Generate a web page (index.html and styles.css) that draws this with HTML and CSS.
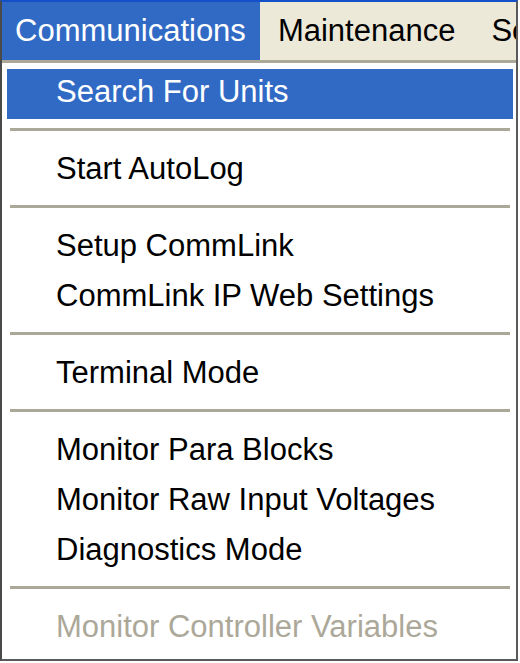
FILE: index.html
```html
<!DOCTYPE html>
<html lang="en">

<head>
    <meta charset="UTF-8">
    <meta name="viewport" content="width=device-width, initial-scale=1.0">
    <title>Communications</title>
    <link rel="stylesheet" href="styles.css">
</head>

<body>

    <div class="window">
        <ul class="menubar">
            <li class="menubar-item active">Communications</li>
            <li class="menubar-item">Maintenance</li>
            <li class="menubar-item">Settings</li>
        </ul>

        <ul class="dropdown">
            <li class="menu-item selected">Search For Units</li>
            <li class="separator"></li>
            <li class="menu-item">Start AutoLog</li>
            <li class="separator"></li>
            <li class="menu-item">Setup CommLink</li>
            <li class="menu-item">CommLink IP Web Settings</li>
            <li class="separator"></li>
            <li class="menu-item">Terminal Mode</li>
            <li class="separator"></li>
            <li class="menu-item">Monitor Para Blocks</li>
            <li class="menu-item">Monitor Raw Input Voltages</li>
            <li class="menu-item">Diagnostics Mode</li>
            <li class="separator"></li>
            <li class="menu-item disabled">Monitor Controller Variables</li>
        </ul>
    </div>

</body>

</html>
```

FILE: styles.css
```css
body {
    margin: 0;
    background-color: #fff;
    font-family: Tahoma, "Liberation Sans", Arial, sans-serif;
    font-size: 31px;
}

ul {
    list-style: none;
    margin: 0;
    padding: 0;
}

.window {
    width: 514px;
    border-top: 2px solid #1450c8;
    border-left: 2px solid #4a4a4a;
    border-right: 2px solid #5a5a5a;
    border-bottom: 2px solid #5a5a5a;
    overflow: hidden;
}

/* top menu bar */
.menubar {
    display: flex;
    height: 58px;
    background-color: #ece9d8;
    border-bottom: 3px solid #aca899;
    white-space: nowrap;
}

.menubar-item {
    line-height: 58px;
    padding: 0 18px;
    color: #000;
}

.menubar-item.active {
    background-color: #316ac5;
    color: #fff;
    padding-left: 13px;
    padding-right: 14px;
}

/* dropdown list */
.dropdown {
    background-color: #fff;
    padding: 6px 3px 5px 5px;
}

.menu-item {
    height: 50px;
    line-height: 46px;
    padding: 0 0 4px 49px;
    box-sizing: border-box;
    color: #000;
    white-space: nowrap;
}

.menu-item.selected {
    background-color: #316ac5;
    color: #fff;
}

.menu-item.disabled {
    color: #aca899;
}

.separator {
    height: 27px;
    padding-top: 9px;
    box-sizing: border-box;
}

.separator::before {
    content: "";
    display: block;
    height: 3px;
    margin: 0 3px;
    background-color: #aca899;
}
```
